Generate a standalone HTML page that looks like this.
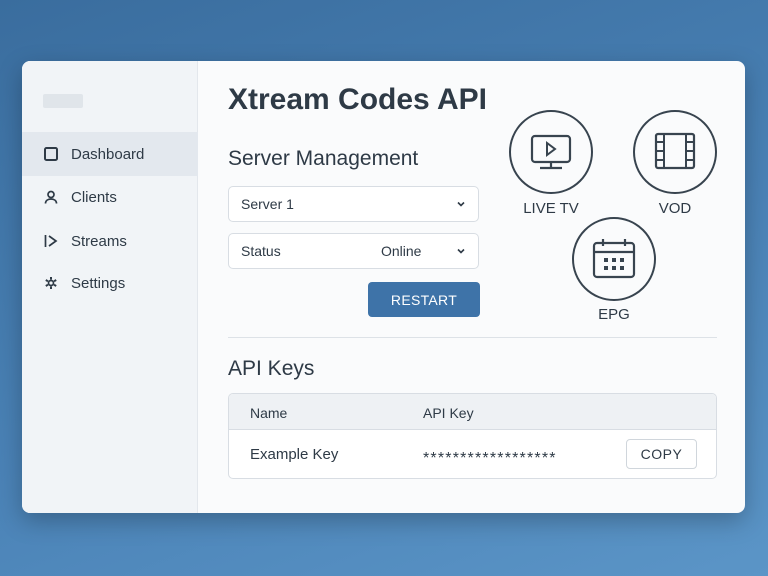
<!DOCTYPE html>
<html><head><style>
*{margin:0;padding:0;box-sizing:border-box}
body{width:768px;height:576px;overflow:hidden;font-family:"Liberation Sans",sans-serif;background:linear-gradient(160deg,#3a6d9e 0%,#4a82b6 55%,#5b95c7 100%);position:relative;color:#2e3a46}
.card{position:absolute;left:22px;top:61px;width:723px;height:452px;background:#fafbfc;border-radius:8px;box-shadow:0 8px 24px rgba(0,0,0,.25);overflow:hidden}
.side{position:absolute;left:0;top:0;width:176px;height:100%;background:#f1f4f7;border-right:1px solid #e3e7ec}
.logo{position:absolute;left:21px;top:33px;width:40px;height:14px;background:#e0e5ea;border-radius:2px}
.nav{position:absolute;left:0;width:176px;height:44px;font-size:15px;display:flex;align-items:center;padding-left:49px;color:#2e3a46}
.nav.act{background:#e3e8ee}
.ic{position:absolute;left:22px;top:50%;transform:translateY(-50%)}
.abs{position:absolute}
.sel{position:absolute;left:206px;width:251px;height:36px;border:1px solid #d8dde3;border-radius:5px;background:#fff;font-size:14px;padding:0 12px;display:flex;align-items:center}
.chev{position:absolute;right:12px;top:12px}
.btn{position:absolute;left:346px;top:221px;width:112px;height:35px;background:#3e73a8;color:#fff;border-radius:4px;font-size:14px;display:flex;align-items:center;justify-content:center;letter-spacing:.3px}
.circ{position:absolute;width:84px;height:84px;border:2px solid #38444f;border-radius:50%}
.lbl{position:absolute;font-size:15px;color:#2e3a46;text-align:center;width:100px}
</style></head><body>
<div class="card">
 <div class="side">
  <div class="logo"></div>
  <div class="nav act" style="top:71px"><svg class="ic" width="14" height="14"><rect x="1" y="1" width="12" height="12" rx="1.5" fill="none" stroke="#2e3a46" stroke-width="2"/></svg>Dashboard</div>
  <div class="nav" style="top:114px"><svg class="ic" width="14" height="14"><circle cx="7" cy="4.5" r="3" fill="none" stroke="#2e3a46" stroke-width="1.7"/><path d="M1.5 13.5c0-3 2.5-4.5 5.5-4.5s5.5 1.5 5.5 4.5" fill="none" stroke="#2e3a46" stroke-width="1.7"/></svg>Clients</div>
  <div class="nav" style="top:158px"><svg class="ic" width="14" height="14"><path d="M1.5 1v12M5 2l7 5-7 5" fill="none" stroke="#2e3a46" stroke-width="1.7"/></svg>Streams</div>
  <div class="nav" style="top:200px"><svg class="ic" width="14" height="14"><circle cx="7" cy="7" r="2.5" fill="none" stroke="#2e3a46" stroke-width="1.7"/><path d="M7 1v2.5M7 10.5V13M1.8 4l2.2 1.3M10 8.7l2.2 1.3M1.8 10l2.2-1.3M10 5.3L12.2 4" stroke="#2e3a46" stroke-width="2"/></svg>Settings</div>
 </div>
 <div class="abs" style="left:206px;top:22px;font-size:30px;font-weight:bold;color:#2e3a46">Xtream Codes API</div>
 <div class="abs" style="left:206px;top:86px;font-size:21px;color:#2e3a46">Server Management</div>
 <div class="sel" style="top:125px">Server 1<svg class="chev" width="10" height="10"><path d="M2 3.5l3 3 3-3" fill="none" stroke="#2e3a46" stroke-width="1.6"/></svg></div>
 <div class="sel" style="top:172px">Status<span style="position:absolute;left:152px">Online</span><svg class="chev" width="10" height="10"><path d="M2 3.5l3 3 3-3" fill="none" stroke="#2e3a46" stroke-width="1.6"/></svg></div>
 <div class="btn">RESTART</div>
 <div class="abs" style="left:206px;top:276px;width:489px;height:1px;background:#dde2e7"></div>
 <div class="abs" style="left:206px;top:296px;font-size:21px;color:#2e3a46">API Keys</div>
 <div class="abs" style="left:206px;top:332px;width:489px;height:86px;border:1px solid #d8dde3;border-radius:5px;background:#fff;overflow:hidden">
  <div style="height:36px;background:#eef1f4;border-bottom:1px solid #d8dde3;position:relative;font-size:14px">
   <span class="abs" style="left:21px;top:11px">Name</span><span class="abs" style="left:194px;top:11px">API Key</span></div>
  <span class="abs" style="left:21px;top:52px;font-size:15px">Example Key</span>
  <span class="abs" style="left:194px;top:56px;font-size:16px;letter-spacing:1.2px">******************</span>
  <div class="abs" style="left:397px;top:45px;width:71px;height:30px;border:1px solid #d0d6dc;border-radius:4px;font-size:14px;display:flex;align-items:center;justify-content:center;letter-spacing:.5px">COPY</div>
 </div>
 <div class="circ" style="left:487px;top:49px"><svg width="80" height="80"><rect x="21" y="24" width="38" height="26" rx="3" fill="none" stroke="#38444f" stroke-width="2.2"/><path d="M36 31v12l8-6z" fill="none" stroke="#38444f" stroke-width="2"/><path d="M29 56h22M40 50v6" stroke="#38444f" stroke-width="2.2"/></svg></div>
 <div class="lbl" style="left:479px;top:139px">LIVE TV</div>
 <div class="circ" style="left:611px;top:49px"><svg width="80" height="80"><rect x="21" y="22" width="38" height="34" rx="2" fill="none" stroke="#38444f" stroke-width="2.2"/><path d="M29 22v34M51 22v34M21 30h8M21 39h8M21 48h8M51 30h8M51 39h8M51 48h8" stroke="#38444f" stroke-width="2"/></svg></div>
 <div class="lbl" style="left:603px;top:139px">VOD</div>
 <div class="circ" style="left:550px;top:156px"><svg width="80" height="80"><rect x="20" y="24" width="40" height="34" rx="3" fill="none" stroke="#38444f" stroke-width="2.2"/><path d="M20 33h40M29 20v7M51 20v7" stroke="#38444f" stroke-width="2.2"/><g fill="#38444f"><rect x="30" y="39" width="4" height="4"/><rect x="38" y="39" width="4" height="4"/><rect x="46" y="39" width="4" height="4"/><rect x="30" y="47" width="4" height="4"/><rect x="38" y="47" width="4" height="4"/><rect x="46" y="47" width="4" height="4"/></g></svg></div>
 <div class="lbl" style="left:542px;top:245px">EPG</div>
</div>
</body></html>
